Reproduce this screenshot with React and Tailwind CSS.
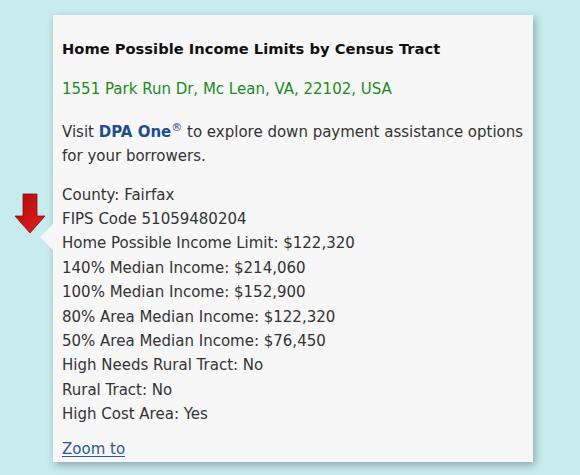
export default function App() {
  const rows = [
    'County: Fairfax',
    'FIPS Code 51059480204',
    'Home Possible Income Limit: $122,320',
    '140% Median Income: $214,060',
    '100% Median Income: $152,900',
    '80% Area Median Income: $122,320',
    '50% Area Median Income: $76,450',
    'High Needs Rural Tract: No',
    'Rural Tract: No',
    'High Cost Area: Yes',
  ];

  return (
    <div className="w-[580px] h-[475px] bg-[#c8ecee] overflow-hidden pt-[15px] pl-[53px]" style={{ fontFamily: '"DejaVu Sans", Verdana, sans-serif' }}>
      <div className="relative w-[480px] h-[447px] bg-[#f7f7f7] shadow-[2px_3px_8px_rgba(0,0,0,0.3)] pl-[9px] pr-[4px] pt-[22px] text-[15px] text-[#333] leading-[24.4px]">
        {/* pointer */}
        <div className="absolute left-[-13px] top-[209px] w-0 h-0 border-y-[13px] border-y-transparent border-r-[13px] border-r-[#f7f7f7]" />
        {/* red arrow */}
        <svg className="absolute left-[-39px] top-[178px]" width="32" height="42" viewBox="0 0 32 42">
          <defs>
            <linearGradient id="rg" x1="0" y1="0" x2="1" y2="1">
              <stop offset="0" stopColor="#a80c0c" />
              <stop offset="1" stopColor="#e8201c" />
            </linearGradient>
          </defs>
          <path d="M9 1 H23 V23 H31 L16 40 L1 23 H9 Z" fill="url(#rg)" stroke="#8a0a0a" strokeWidth="0.8" />
        </svg>

        <div className="font-bold text-[14.7px] text-[#111]">Home Possible Income Limits by Census Tract</div>
        <div className="mt-4 text-[#1d8a1d]">1551 Park Run Dr, Mc Lean, VA, 22102, USA</div>
        <div className="mt-[18px]">
          Visit{' '}
          <span className="font-bold text-[#1f4e8c]">
            DPA One<span className="relative top-[-6px] font-normal text-[11px] leading-none">®</span>
          </span>{' '}
          to explore down payment assistance options for your borrowers.
        </div>
        <div className="mt-[14px]">
          {rows.map((r) => (
            <div key={r}>{r}</div>
          ))}
        </div>
        <div className="mt-[10px] text-[#2b5896] underline underline-offset-2">Zoom to</div>
      </div>
    </div>
  );
}
